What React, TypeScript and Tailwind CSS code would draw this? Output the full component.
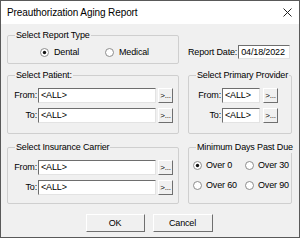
import React from "react";

const F = "font-['Liberation_Sans',Arial,sans-serif] tracking-[-0.15px]";

function Radio({ checked }: { checked?: boolean }) {
  return (
    <svg width="9" height="9" viewBox="0 0 9 9" className="shrink-0">
      <circle cx="4.5" cy="4.5" r="4" fill="#ffffff" stroke="#8c8c8c" strokeWidth="1" />
      {checked && <circle cx="4.5" cy="4.5" r="1.7" fill="#111111" />}
    </svg>
  );
}

function Input({ value, w }: { value: string; w: string }) {
  return (
    <div
      className={`${w} h-[15px] shrink-0 bg-white border border-t-[#6e6e6e] border-l-[#6e6e6e] border-r-[#e3e3e3] border-b-[#e3e3e3] flex items-center pl-[2px] text-[9px] leading-none text-black whitespace-nowrap overflow-hidden`}
    >
      {value}
    </div>
  );
}

function Dots() {
  return (
    <div className="w-[15px] h-[15px] shrink-0 bg-[#f0f0f0] border border-t-white border-l-white border-r-[#6f6f6f] border-b-[#6f6f6f] flex items-center justify-center text-[8px] leading-none text-black">
      &gt;...
    </div>
  );
}

function Group({
  title,
  className,
  children,
}: {
  title: string;
  className: string;
  children: React.ReactNode;
}) {
  return (
    <fieldset className={`min-w-0 shrink-0 border border-[#cfcfcf] rounded-[2px] ${className}`}>
      <legend className="ml-[7px] px-[1px] text-[9px] leading-[11px] text-black whitespace-nowrap">{title}</legend>
      {children}
    </fieldset>
  );
}

function FromTo({
  labelW,
  inputW,
  gap,
}: {
  labelW: string;
  inputW: string;
  gap: string;
}) {
  return (
    <div className="flex flex-col gap-[5px]">
      {["From:", "To:"].map((l) => (
        <div key={l} className="flex items-center">
          <div className={`${labelW} shrink-0 text-right text-[9px] leading-none pr-[1px] text-black`}>{l}</div>
          <Input value="<ALL>" w={inputW} />
          <div className={`${gap} shrink-0`} />
          <Dots />
        </div>
      ))}
    </div>
  );
}

export default function App() {
  return (
    <div className={`w-[300px] h-[238px] border border-[#595959] bg-[#f0f0f0] flex flex-col ${F}`}>
      <div className="h-[23px] bg-white flex items-center justify-between pl-[6px] pr-[7px]">
        <span className="text-[10px] tracking-[-0.1px] text-black">Preauthorization Aging Report</span>
        <svg width="9" height="9" viewBox="0 0 9 9">
          <path d="M0.5 0.5 L8.5 8.5 M8.5 0.5 L0.5 8.5" stroke="#222" strokeWidth="1" />
        </svg>
      </div>
      <div className="flex flex-col pl-[6px] pt-[6px]">
        <div className="flex gap-[9px]">
          <Group title="Select Report Type" className="w-[172px] h-[34px]">
            <div className="flex items-center h-[22px] pl-[32px] text-[9px] leading-none text-black">
              <div className="flex items-center gap-[5px] w-[65px]">
                <Radio checked />
                <span>Dental</span>
              </div>
              <div className="flex items-center gap-[5px]">
                <Radio />
                <span>Medical</span>
              </div>
            </div>
          </Group>
          <div className="flex items-center h-[34px] pt-[10px] text-[9px] leading-none text-black whitespace-nowrap">
            <span className="mr-[1px]">Report Date:</span>
            <div className="w-[52px] h-[14px] bg-white border border-t-[#6e6e6e] border-l-[#6e6e6e] border-r-[#e3e3e3] border-b-[#e3e3e3] flex items-center pl-[2px]">
              04/18/2022
            </div>
          </div>
        </div>

        <div className="flex gap-[9px] mt-[6px]">
          <Group title="Select Patient:" className="w-[172px] h-[64px]">
            <div className="pt-[7px]">
              <FromTo labelW="w-[30px]" inputW="w-[118px]" gap="w-[2px]" />
            </div>
          </Group>
          <Group title="Select Primary Provider" className="w-[104px] h-[64px]">
            <div className="pt-[7px]">
              <FromTo labelW="w-[33px]" inputW="w-[38px]" gap="w-[3px]" />
            </div>
          </Group>
        </div>

        <div className="flex gap-[9px] mt-[8px]">
          <Group title="Select Insurance Carrier" className="w-[172px] h-[62px]">
            <div className="pt-[7px]">
              <FromTo labelW="w-[30px]" inputW="w-[118px]" gap="w-[2px]" />
            </div>
          </Group>
          <Group title="Minimum Days Past Due" className="w-[104px] h-[62px]">
            <div className="grid grid-cols-[52px_48px] gap-y-[11px] pl-[4px] pt-[8px] text-[9px] leading-none text-black whitespace-nowrap">
              <div className="flex items-center gap-[4px]">
                <Radio checked />
                <span>Over 0</span>
              </div>
              <div className="flex items-center gap-[4px]">
                <Radio />
                <span>Over 30</span>
              </div>
              <div className="flex items-center gap-[4px]">
                <Radio />
                <span>Over 60</span>
              </div>
              <div className="flex items-center gap-[4px]">
                <Radio />
                <span>Over 90</span>
              </div>
            </div>
          </Group>
        </div>
      </div>
      <div className="flex justify-center gap-[8px] mt-[10px] pr-[2px]">
        <button className="w-[59px] h-[18px] bg-[#f0f0f0] border border-t-white border-l-white border-r-[#6f6f6f] border-b-[#6f6f6f] text-[9px] leading-none text-black">
          OK
        </button>
        <button className="w-[60px] h-[18px] bg-[#f0f0f0] border border-t-white border-l-white border-r-[#6f6f6f] border-b-[#6f6f6f] text-[9px] leading-none text-black">
          Cancel
        </button>
      </div>
    </div>
  );
}
